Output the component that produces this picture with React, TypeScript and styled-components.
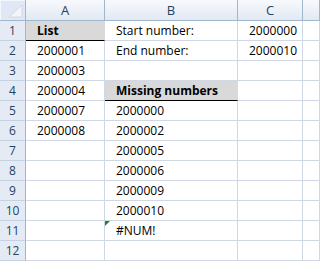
import { Fragment } from 'react';
import styled, { createGlobalStyle } from 'styled-components';

const GlobalStyle = createGlobalStyle`
	html, body {
		margin: 0;
		padding: 0;
		background: #ffffff;
	}
	body {
		font-family: "Open Sans", "Liberation Sans", sans-serif;
		font-size: 12px;
	}
`;

const Sheet = styled.div`
	display: grid;
	grid-template-columns: 26px 79px 133px 65px 1fr;
	grid-template-rows: 21px;
	grid-auto-rows: 20px;
	width: 320px;
	height: 261px;
	overflow: hidden;
	background: #ffffff;
`;

const Corner = styled.div`
	box-sizing: border-box;
	border-right: 1px solid #9eb6ce;
	border-bottom: 1px solid #9eb6ce;
	background: #dfe8f4;
	box-shadow: inset 1px 1px 0 #f4f7fb;

	svg {
		display: block;
	}
`;

const ColumnHeader = styled.div`
	box-sizing: border-box;
	border-right: 1px solid #9eb6ce;
	border-bottom: 1px solid #9eb6ce;
	background: linear-gradient(#f7f9fc, #e2e9f3);
	color: #27415f;
	text-align: center;
	line-height: 20px;
	font-size: 13px;
`;

const RowHeader = styled.div`
	box-sizing: border-box;
	border-right: 1px solid #9eb6ce;
	border-bottom: 1px solid #c5d2e3;
	background: #e4ebf5;
	color: #27415f;
	text-align: center;
	line-height: 20px;
`;

const Cell = styled.div<{ $align?: 'left' | 'right'; $heading?: boolean }>`
	position: relative;
	box-sizing: border-box;
	border-right: 1px solid ${p => (p.$heading ? '#d9d9d9' : '#d0d7e5')};
	border-bottom: 1px solid ${p => (p.$heading ? '#000000' : '#d0d7e5')};
	background: ${p => (p.$heading ? '#d9d9d9' : '#ffffff')};
	font-weight: ${p => (p.$heading ? 700 : 400)};
	color: #000000;
	text-align: ${p => p.$align || 'left'};
	padding: ${p => (p.$align === 'right' ? '0 5px 0 0' : '0 0 0 11px')};
	line-height: 20px;
	white-space: nowrap;
`;

const ErrorFlag = styled.span`
	position: absolute;
	left: 0;
	top: 0;
	width: 0;
	height: 0;
	border-top: 5px solid #1e8c1e;
	border-right: 5px solid transparent;
`;

type CellData = { text?: string; align?: 'left' | 'right'; heading?: boolean; flag?: boolean };

const rows: CellData[][] = [
	[{ text: 'List', heading: true }, { text: 'Start number:' }, { text: '2000000', align: 'right' }, {}],
	[{ text: '2000001' }, { text: 'End number:' }, { text: '2000010', align: 'right' }, {}],
	[{ text: '2000003' }, {}, {}, {}],
	[{ text: '2000004' }, { text: 'Missing numbers', heading: true }, {}, {}],
	[{ text: '2000007' }, { text: '2000000' }, {}, {}],
	[{ text: '2000008' }, { text: '2000002' }, {}, {}],
	[{}, { text: '2000005' }, {}, {}],
	[{}, { text: '2000006' }, {}, {}],
	[{}, { text: '2000009' }, {}, {}],
	[{}, { text: '2000010' }, {}, {}],
	[{}, { text: '#NUM!', flag: true }, {}, {}],
	[{}, {}, {}, {}],
];

const columns = ['A', 'B', 'C', ''];

const App = () => {
	return (
		<>
			<GlobalStyle />
			<Sheet>
				<Corner>
					<svg width="25" height="20" viewBox="0 0 25 20">
						<polygon points="22,5 22,17 9,17" fill="#f3f5f8" stroke="#c3cad4" strokeWidth="0.6" />
					</svg>
				</Corner>
				{columns.map((c, i) => (
					<ColumnHeader key={i}>{c}</ColumnHeader>
				))}
				{rows.map((row, r) => (
					<Fragment key={r}>
						<RowHeader>{r + 1}</RowHeader>
						{row.map((cell, c) => (
							<Cell key={c} $align={cell.align} $heading={cell.heading}>
								{cell.flag && <ErrorFlag />}
								{cell.text}
							</Cell>
						))}
					</Fragment>
				))}
			</Sheet>
		</>
	);
};

export default App;
